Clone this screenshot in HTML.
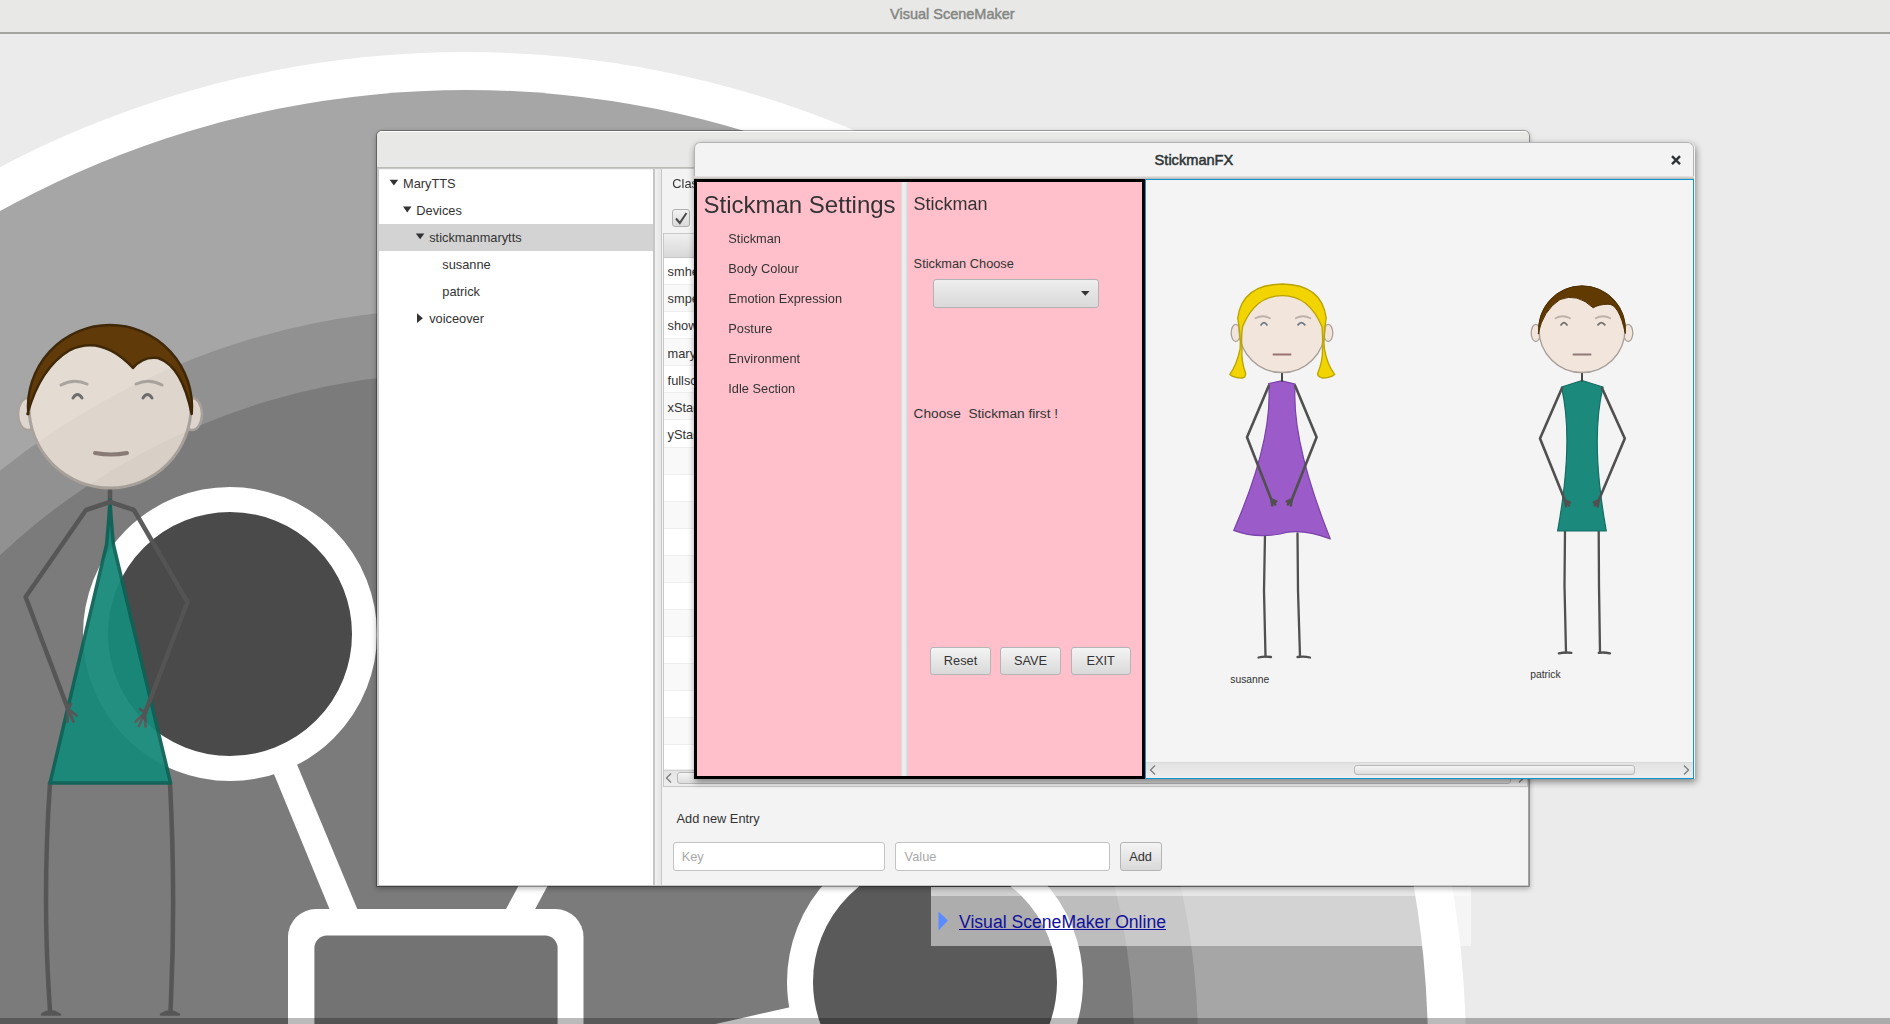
<!DOCTYPE html>
<html><head><meta charset="utf-8">
<style>
*{box-sizing:border-box}
html,body{margin:0;padding:0}
body{width:1890px;height:1024px;overflow:hidden;position:relative;background:#ebebeb;font-family:"Liberation Sans",sans-serif;color:#333}
.a{position:absolute}
.t{position:absolute;line-height:1;white-space:nowrap}
</style></head><body>
<!-- BACKGROUND -->
<svg class="a" style="left:0;top:0" width="1890" height="1024" viewBox="0 0 1890 1024">
<rect width="1890" height="1024" fill="#ebebeb"/>
<circle cx="466" cy="1052" r="1000" fill="#fff"/>
<circle cx="467" cy="1051" r="961" fill="#a6a6a6"/>
<circle cx="461.4" cy="1045" r="736.6" fill="#919191"/>
<circle cx="460.9" cy="1045.8" r="673.1" fill="#7b7b7b"/>
<!-- ring 1 + handle -->
<polygon points="268.5,760.8 292,752.5 357.4,909.2 329.6,909.2" fill="#fff"/>
<circle cx="230" cy="634" r="134.5" fill="#4a4a4a" stroke="#fff" stroke-width="25"/>
<!-- TV -->
<polygon points="504.4,912 533.5,912 567,850 538,850" fill="#fff"/>
<rect x="288" y="909" width="295.5" height="200" rx="28" fill="#fff"/>
<rect x="314.4" y="935.6" width="243.2" height="150" rx="12.5" fill="#737373"/>
<!-- ring 2 + handle -->
<polygon points="800,1005 640,1041 646,1065 806,1029" fill="#fff"/>
<circle cx="935" cy="982" r="135" fill="#5a5a5a" stroke="#fff" stroke-width="26"/>
<!-- big stickman -->
<g id="bigman" stroke-linecap="round" stroke-linejoin="round" opacity="0.95">
<!-- legs -->
<path d="M50,783 Q42,900 50,1010" fill="none" stroke="#555" stroke-width="4.5"/>
<path d="M170,783 Q176,900 170.5,1010" fill="none" stroke="#555" stroke-width="4.5"/>
<path d="M42,1014.5 Q50,1008 60,1014.5 Z" fill="#555" stroke="#555" stroke-width="2.5"/>
<path d="M161,1014.5 Q170,1008 179,1014.5 Z" fill="#555" stroke="#555" stroke-width="2.5"/>
<!-- neck -->
<line x1="110" y1="490" x2="110" y2="503" stroke="#555" stroke-width="4.5"/>
<!-- dress -->
<path d="M110,500 Q108.5,525 106.5,545 L50,783 L170.5,783 L113.5,545 Q111.5,525 110,500 Z" fill="#178a7a" stroke="#0f6357" stroke-width="3.5"/>
<!-- arms -->
<polyline points="68,709 25.6,597 86,510 110,502 134,510 187.5,602 145,713" fill="none" stroke="#555" stroke-width="4.5"/>
<path d="M68,709 L71,704 M68,709 L76.5,715.5 M68,709 L73.5,721.5 M68,709 L67.5,721.5 M145,713 L140,709 M145,713 L135.7,721.5 M145,713 L138.9,726 M145,713 L145.5,726.5" fill="none" stroke="#555" stroke-width="2.8"/>
<!-- ears -->
<mask id="noface"><rect x="0" y="300" width="300" height="250" fill="#fff"/><circle cx="110" cy="407" r="80" fill="#000"/></mask>
<g mask="url(#noface)"><ellipse cx="28" cy="414" rx="10" ry="16" fill="#e1d9d1" stroke="#aaa29b" stroke-width="2.5"/><ellipse cx="192" cy="414" rx="10" ry="16" fill="#e1d9d1" stroke="#aaa29b" stroke-width="2.5"/></g>
<!-- face -->
<circle cx="110" cy="407" r="81" fill="#fdf1e6" fill-opacity="0.75" stroke="#aaa29b" stroke-width="3"/>
<!-- hair -->
<path d="M28.3,414 A82,82 0 1 1 191.7,414 Q182,366 158,358 Q143,356 133,368 Q102,335 70,350 Q40,368 27.5,414 Z" fill="#5c3400" stroke="#3a2200" stroke-width="2.5"/>
<!-- brows -->
<path d="M61,385 Q74,378 87,384" fill="none" stroke="#aaa49e" stroke-width="3"/>
<path d="M136,384 Q149,378 162,385" fill="none" stroke="#aaa49e" stroke-width="3"/>
<!-- eyes -->
<path d="M73,398 Q77.5,391 82,398" fill="none" stroke="#6b6b6b" stroke-width="3"/>
<path d="M143,398 Q147.5,391 152,398" fill="none" stroke="#6b6b6b" stroke-width="3"/>
<!-- mouth -->
<path d="M95,453 Q111,456 127,453" fill="none" stroke="#8b7b77" stroke-width="4"/>
</g>
<rect x="0" y="1018" width="1890" height="6" fill="#000" opacity="0.27"/>
</svg>

<!-- TITLE BAR -->
<div class="a" style="left:0;top:0;width:1890px;height:32px;background:#e8e8e7;border-bottom:2px solid #a4a49f;box-sizing:content-box"></div>
<div class="t" style="left:890px;top:7px;font-size:14.5px;color:#848682;-webkit-text-stroke:0.45px #848682">Visual SceneMaker</div>

<!-- LINK PANEL -->
<div class="a" style="left:931px;top:887px;width:540px;height:59px;background:rgba(255,255,255,0.5)"></div>
<div class="a" style="left:931px;top:887px;width:540px;height:8.5px;background:rgba(255,255,255,0.43)"></div>
<svg class="a" style="left:938px;top:911px" width="11" height="20"><polygon points="0.5,0.5 10,9.5 0.5,19.5" fill="#5b8cff"/></svg>
<div class="t" style="left:959px;top:914px;font-size:17.6px;color:#10109c;text-decoration:underline">Visual SceneMaker Online</div>

<!-- MARYTTS WINDOW -->
<div id="mary" class="a" style="left:376px;top:130px;width:1154px;height:757px;background:#c8c8c8;background-clip:padding-box;border:1px solid rgba(0,0,0,0.31);border-right-width:2px;border-radius:6px 6px 0 0;box-shadow:0 2px 5px rgba(0,0,0,0.25)">
</div>

<div class="a" style="left:377px;top:131px;width:1152px;height:36px;background:#e8e8e7;border-top:1px solid #fff;border-radius:5px 5px 0 0"></div>
<div class="a" style="left:379px;top:169px;width:1149px;height:716px;background:#f3f3f3"></div>
<div class="a" style="left:377px;top:167px;width:1152px;height:1px;background:#bcbcb6"></div>
<div class="a" style="left:379px;top:170px;width:274px;height:715px;background:#fff"></div>
<div class="a" style="left:653px;top:169px;width:1.8px;height:716px;background:#c6c6c6"></div>
<div class="a" style="left:654.8px;top:169px;width:6px;height:716px;background:linear-gradient(90deg,#f0f0f0,#e6e6e6)"></div>
<div class="a" style="left:660.6px;top:169px;width:1.4px;height:716px;background:#c8c8c8"></div>
<div class="a" style="left:379px;top:224px;width:274px;height:26.5px;background:#d3d3d3"></div>
<div class="t" style="left:403px;top:178px;font-size:12.8px;color:#333;">MaryTTS</div>
<div class="t" style="left:416.3px;top:205px;font-size:12.8px;color:#333;">Devices</div>
<div class="t" style="left:429.2px;top:232px;font-size:12.8px;color:#333;">stickmanmarytts</div>
<div class="t" style="left:442.3px;top:259px;font-size:12.8px;color:#333;">susanne</div>
<div class="t" style="left:442.3px;top:286px;font-size:12.8px;color:#333;">patrick</div>
<div class="t" style="left:429.2px;top:313px;font-size:12.8px;color:#333;">voiceover</div>
<svg class="a" style="left:0;top:0" width="700" height="340"><polygon points="389.6,179.7 398.2,179.7 393.9,185.5" fill="#333"/><polygon points="403,206.6 411.5,206.6 407.25,212.4" fill="#333"/><polygon points="415.8,233.5 424.4,233.5 420.1,239.3" fill="#333"/><polygon points="417,313.3 422.9,318.2 417,323" fill="#333"/></svg>
<div class="t" style="left:672.3px;top:178px;font-size:12.8px;color:#333;">Class</div>
<div class="a" style="left:672.3px;top:209.2px;width:17.5px;height:17.8px;border:1px solid #b0b0b0;border-radius:3px;background:linear-gradient(#f2f2f2,#dadada)"></div>
<svg class="a" style="left:672px;top:209px" width="18" height="18"><path d="M4,9.5 L7.8,14 L14.5,4" fill="none" stroke="#4a4a4a" stroke-width="2"/></svg>
<div class="a" style="left:662.5px;top:232.5px;width:865px;height:554px;background:#fff;border:1px solid #c8c8c8"></div>
<div class="a" style="left:663.5px;top:233.5px;width:863px;height:24.7px;background:linear-gradient(#f0f0f0,#d8d8d8);border-bottom:1px solid #c4c4c4"></div>
<div class="a" style="left:663.5px;top:258.20px;width:863px;height:27.05px;background:#fff;border-bottom:1px solid #eeeeee"></div>
<div class="a" style="left:663.5px;top:285.25px;width:863px;height:27.05px;background:#f9f9f9;border-bottom:1px solid #eeeeee"></div>
<div class="a" style="left:663.5px;top:312.30px;width:863px;height:27.05px;background:#fff;border-bottom:1px solid #eeeeee"></div>
<div class="a" style="left:663.5px;top:339.35px;width:863px;height:27.05px;background:#f9f9f9;border-bottom:1px solid #eeeeee"></div>
<div class="a" style="left:663.5px;top:366.40px;width:863px;height:27.05px;background:#fff;border-bottom:1px solid #eeeeee"></div>
<div class="a" style="left:663.5px;top:393.45px;width:863px;height:27.05px;background:#f9f9f9;border-bottom:1px solid #eeeeee"></div>
<div class="a" style="left:663.5px;top:420.50px;width:863px;height:27.05px;background:#fff;border-bottom:1px solid #eeeeee"></div>
<div class="a" style="left:663.5px;top:447.55px;width:863px;height:27.05px;background:#f9f9f9;border-bottom:1px solid #eeeeee"></div>
<div class="a" style="left:663.5px;top:474.60px;width:863px;height:27.05px;background:#fff;border-bottom:1px solid #eeeeee"></div>
<div class="a" style="left:663.5px;top:501.65px;width:863px;height:27.05px;background:#f9f9f9;border-bottom:1px solid #eeeeee"></div>
<div class="a" style="left:663.5px;top:528.70px;width:863px;height:27.05px;background:#fff;border-bottom:1px solid #eeeeee"></div>
<div class="a" style="left:663.5px;top:555.75px;width:863px;height:27.05px;background:#f9f9f9;border-bottom:1px solid #eeeeee"></div>
<div class="a" style="left:663.5px;top:582.80px;width:863px;height:27.05px;background:#fff;border-bottom:1px solid #eeeeee"></div>
<div class="a" style="left:663.5px;top:609.85px;width:863px;height:27.05px;background:#f9f9f9;border-bottom:1px solid #eeeeee"></div>
<div class="a" style="left:663.5px;top:636.90px;width:863px;height:27.05px;background:#fff;border-bottom:1px solid #eeeeee"></div>
<div class="a" style="left:663.5px;top:663.95px;width:863px;height:27.05px;background:#f9f9f9;border-bottom:1px solid #eeeeee"></div>
<div class="a" style="left:663.5px;top:691.00px;width:863px;height:27.05px;background:#fff;border-bottom:1px solid #eeeeee"></div>
<div class="a" style="left:663.5px;top:718.05px;width:863px;height:27.05px;background:#f9f9f9;border-bottom:1px solid #eeeeee"></div>
<div class="a" style="left:663.5px;top:745.10px;width:863px;height:24.90px;background:#fff;border-bottom:1px solid #eeeeee"></div>
<div class="t" style="left:667.6px;top:266px;font-size:12.8px;color:#333;">smheadless</div>
<div class="t" style="left:667.6px;top:293px;font-size:12.8px;color:#333;">smpersistent</div>
<div class="t" style="left:667.6px;top:320px;font-size:12.8px;color:#333;">showstage</div>
<div class="t" style="left:667.6px;top:348px;font-size:12.8px;color:#333;">marytts</div>
<div class="t" style="left:667.6px;top:375px;font-size:12.8px;color:#333;">fullscreen</div>
<div class="t" style="left:667.6px;top:402px;font-size:12.8px;color:#333;">xStage</div>
<div class="t" style="left:667.6px;top:429px;font-size:12.8px;color:#333;">yStage</div>
<div class="a" style="left:663.5px;top:770px;width:863px;height:16px;background:linear-gradient(#e4e4e4,#eeeeee);border-top:1px solid #d0d0d0"></div>
<div class="a" style="left:677px;top:772px;width:834px;height:12px;border:1px solid #b8b8b8;border-radius:3px;background:linear-gradient(#f6f6f6,#dcdcdc)"></div>
<svg class="a" style="left:664px;top:772px" width="10" height="12"><polyline points="7,1.5 2.5,6 7,10.5" fill="none" stroke="#7d7d7d" stroke-width="1.3"/></svg>
<svg class="a" style="left:1516px;top:772px" width="10" height="12"><polyline points="3,1.5 7.5,6 3,10.5" fill="none" stroke="#7d7d7d" stroke-width="1.3"/></svg>
<div class="t" style="left:676.5px;top:813px;font-size:12.8px;color:#333;">Add new Entry</div>
<div class="a" style="left:672.5px;top:842.4px;width:212.3px;height:28.2px;background:#fff;border:1px solid #c2c2c2;border-radius:3px"></div>
<div class="t" style="left:681.7px;top:851px;font-size:12.8px;color:#a9a9a9;">Key</div>
<div class="a" style="left:895.4px;top:842.4px;width:214.3px;height:28.2px;background:#fff;border:1px solid #c2c2c2;border-radius:3px"></div>
<div class="t" style="left:904.6px;top:851px;font-size:12.8px;color:#a9a9a9;">Value</div>
<div class="a" style="left:1120.2px;top:842.2px;width:41.5px;height:28.6px;background:linear-gradient(#f4f4f4,#d9d9d9);border:1px solid #b5b5b5;border-radius:3px"></div>
<div class="t" style="left:1129.2px;top:851px;font-size:12.8px;color:#333;">Add</div>

<!-- STICKMANFX WINDOW -->
<div id="sfx" class="a" style="left:694px;top:141.5px;width:1000.5px;height:637.5px;background:#f3f3f3;border-radius:6px 6px 0 0;box-shadow:1px 3px 7px rgba(0,0,0,0.45)"></div>
<div class="a" style="left:693.7px;top:141.5px;width:1000.6px;height:37.5px;border:1px solid #b3b3b3;border-bottom:none;border-radius:6px 6px 0 0;background:#f3f3f3"></div>
<div class="t" style="left:1154.6px;top:153px;font-size:14.6px;color:#2e3436;-webkit-text-stroke:0.5px #2e3436">StickmanFX</div>
<svg class="a" style="left:1670px;top:154px" width="12" height="12"><path d="M2,2.2 L10,10.2 M10,2.2 L2,10.2" stroke="#2e3436" stroke-width="2.4"/></svg>
<div class="a" style="left:694px;top:178.6px;width:451px;height:600.4px;background:#ffc0cb;border:3px solid #000"></div>
<div class="a" style="left:900.9px;top:182px;width:6.9px;height:594px;background:linear-gradient(90deg,#d8d8d8,#f0f0f0 30%,#e8e8e8 70%,#d0d0d0)"></div>
<div class="t" style="left:703.5px;top:193px;font-size:24px;color:#333;">Stickman Settings</div>
<div class="t" style="left:728.3px;top:233px;font-size:12.8px;color:#333;">Stickman</div>
<div class="t" style="left:728.3px;top:263px;font-size:12.8px;color:#333;">Body Colour</div>
<div class="t" style="left:728.3px;top:293px;font-size:12.8px;color:#333;">Emotion Expression</div>
<div class="t" style="left:728.3px;top:323px;font-size:12.8px;color:#333;">Posture</div>
<div class="t" style="left:728.3px;top:353px;font-size:12.8px;color:#333;">Environment</div>
<div class="t" style="left:728.3px;top:383px;font-size:12.8px;color:#333;">Idle Section</div>
<div class="t" style="left:913.6px;top:195px;font-size:18px;color:#333;">Stickman</div>
<div class="t" style="left:913.6px;top:258px;font-size:12.8px;color:#333;">Stickman Choose</div>
<div class="a" style="left:933.2px;top:279px;width:165.8px;height:28.8px;background:linear-gradient(#eeeeee,#d9d9d9);border:1px solid #b3b3b3;border-radius:3px"></div>
<svg class="a" style="left:1080px;top:290px" width="11" height="7"><polygon points="1,1 9.6,1 5.3,5.8" fill="#333"/></svg>
<div class="t" style="left:913.6px;top:407px;font-size:13.7px;color:#333;">Choose&nbsp; Stickman first !</div>
<div class="a" style="left:930.4px;top:646.6px;width:60.3px;height:28.5px;background:linear-gradient(#f4f4f4,#d9d9d9);border:1px solid #b5b5b5;border-radius:3px;font-size:12.8px;line-height:26.5px;text-align:center;color:#333">Reset</div>
<div class="a" style="left:1000.4px;top:646.6px;width:60.3px;height:28.5px;background:linear-gradient(#f4f4f4,#d9d9d9);border:1px solid #b5b5b5;border-radius:3px;font-size:12.8px;line-height:26.5px;text-align:center;color:#333">SAVE</div>
<div class="a" style="left:1070.5px;top:646.6px;width:60.3px;height:28.5px;background:linear-gradient(#f4f4f4,#d9d9d9);border:1px solid #b5b5b5;border-radius:3px;font-size:12.8px;line-height:26.5px;text-align:center;color:#333">EXIT</div>
<div class="a" style="left:1145px;top:179px;width:549.2px;height:600px;background:#f4f4f4;border:1px solid #0a98d6;border-bottom-width:1.5px"></div>
<div class="a" style="left:694px;top:176px;width:1000.3px;height:2.6px;background:linear-gradient(#ecebea,#b9b2ac)"></div>
<div class="a" style="left:1146px;top:762px;width:547px;height:15.5px;background:linear-gradient(#e2e2e2,#eeeeee);border-top:1px solid #d8d8d8"></div>
<div class="a" style="left:1354.2px;top:764.6px;width:280.4px;height:10.8px;border:1px solid #b8b8b8;border-radius:3px;background:linear-gradient(#f6f6f6,#dcdcdc)"></div>
<svg class="a" style="left:1148px;top:764px" width="10" height="12"><polyline points="7,1.5 2.5,6 7,10.5" fill="none" stroke="#7d7d7d" stroke-width="1.3"/></svg>
<svg class="a" style="left:1681px;top:764px" width="10" height="12"><polyline points="3,1.5 7.5,6 3,10.5" fill="none" stroke="#7d7d7d" stroke-width="1.3"/></svg>
<svg class="a" style="left:1147px;top:180.5px" width="545" height="581" viewBox="1147 180.5 545 581">
<g stroke-linecap="round" stroke-linejoin="round" fill="none">
<!-- SUSANNE -->
<path d="M1265,533 L1264,590 L1265.5,656 M1297.5,533 L1298,590 L1300,656" stroke="#505050" stroke-width="2.3"/>
<path d="M1258.5,657 Q1264,655.5 1271,656.5 M1297.5,656.5 Q1304,655.5 1310,657" stroke="#505050" stroke-width="2.3"/>
<path d="M1268.7,383 L1281.6,380.3 L1295.2,383.7 Q1291,440 1330.3,538.4 Q1300,527 1280,533.5 Q1255,538 1233.7,529.9 Q1273,440 1268.7,383 Z" fill="#9b5bc8" stroke="#7a42ab" stroke-width="1.2"/>
<polyline points="1268.7,385.4 1247,436.7 1271.3,499" stroke="#505050" stroke-width="2.6"/>
<polyline points="1295.2,385.4 1316.6,436.7 1291.8,499" stroke="#505050" stroke-width="2.6"/>
<path d="M1271.3,499 l1,6 M1271.3,499 l4,5 M1271.3,499 l5,2 M1291.8,499 l-1,6 M1291.8,499 l-4,5 M1291.8,499 l-5,2" stroke="#505050" stroke-width="2.5"/>
<line x1="1282" y1="372" x2="1282" y2="380.5" stroke="#454545" stroke-width="2"/>
<ellipse cx="1235.8" cy="332.4" rx="4.6" ry="8.6" fill="#f1e5dc" stroke="#aaa09a" stroke-width="1.3"/>
<ellipse cx="1328.2" cy="332.4" rx="4.6" ry="8.6" fill="#f1e5dc" stroke="#aaa09a" stroke-width="1.3"/>
<circle cx="1282" cy="329" r="43" fill="#f1e5dc" stroke="#a99f99" stroke-width="1.4"/>
<path d="M1282.3,283.5 Q1322,284 1326.2,317.7 Q1323,336 1324.4,348.2 Q1327,364 1334.7,373.9 Q1330,377.5 1322,377.5 Q1317,376 1317.7,372.7 Q1323,360 1322.5,348.2 Q1323,336 1322,326.3 Q1309,295 1282.3,295.1 Q1255,295 1242.6,326.3 Q1241,336 1242,348.2 Q1241,360 1245.6,372.7 Q1246,377 1242,377.5 Q1234,377.5 1229.8,373.9 Q1237,364 1240.1,348.2 Q1241,336 1237.7,317.7 Q1242,284 1282.3,283.5 Z" fill="#f2d400" stroke="#b9a300" stroke-width="1.3"/>
<path d="M1255.4,317.7 Q1262.7,313.8 1270,317.7 M1295.7,317.7 Q1303,313.8 1310.3,317.7" stroke="#bcb0a8" stroke-width="1.8"/>
<path d="M1261,324.4 Q1264,319.8 1267,324.4 M1298,324.4 Q1301.4,319.8 1304.8,324.4" stroke="#6e7a8a" stroke-width="1.8"/>
<line x1="1273.5" y1="354.1" x2="1290.5" y2="354.1" stroke="#9a7272" stroke-width="2"/>
<!-- PATRICK -->
<path d="M1565,530 L1564.5,585 L1566,652 M1598.7,530 L1599,585 L1600,652" stroke="#505050" stroke-width="2.3"/>
<path d="M1558.8,652.8 Q1565,651.5 1571.4,652.3 M1598.7,652.3 Q1604,651.5 1610,652.8" stroke="#505050" stroke-width="2.3"/>
<path d="M1561.5,386.5 L1582,380 L1603,386.5 Q1590,440 1606.3,530.5 L1557.6,530.5 Q1574,440 1561.5,386.5 Z" fill="#1b8a7c" stroke="#146e63" stroke-width="1.2"/>
<polyline points="1562,387.6 1540,438 1565,500" stroke="#505050" stroke-width="2.6"/>
<polyline points="1602,387.6 1624.8,438 1598.7,500" stroke="#505050" stroke-width="2.6"/>
<path d="M1565,500 l1,6 M1565,500 l4,5 M1565,500 l5,2 M1598.7,500 l-1,6 M1598.7,500 l-4,5 M1598.7,500 l-5,2" stroke="#505050" stroke-width="2.5"/>
<line x1="1582" y1="372" x2="1582" y2="380.5" stroke="#454545" stroke-width="2"/>
<ellipse cx="1535.8" cy="332.4" rx="4.6" ry="8.6" fill="#f1e5dc" stroke="#aaa09a" stroke-width="1.3"/>
<ellipse cx="1628.2" cy="332.4" rx="4.6" ry="8.6" fill="#f1e5dc" stroke="#aaa09a" stroke-width="1.3"/>
<circle cx="1582" cy="329" r="43" fill="#f1e5dc" stroke="#a99f99" stroke-width="1.4"/>
<path d="M1538.7,333 A43.5,43.5 0 1 1 1625.3,333 Q1619,303 1607.9,303.7 Q1598,304 1593.2,307.3 Q1577,292 1560,299 Q1543,310 1538.2,333 Z" fill="#603a00" stroke="#4d2e00" stroke-width="1"/>
<path d="M1555.4,317.7 Q1562.7,313.8 1570,317.7 M1595.7,317.7 Q1603,313.8 1610.3,317.7" stroke="#bcb0a8" stroke-width="1.8"/>
<path d="M1561,324.4 Q1564,319.8 1567,324.4 M1598,324.4 Q1601.4,319.8 1604.8,324.4" stroke="#707070" stroke-width="1.8"/>
<line x1="1573.5" y1="354.1" x2="1590.5" y2="354.1" stroke="#8f7b77" stroke-width="2"/>
</g></svg>

<div class="t" style="left:1230.3px;top:675px;font-size:10.3px;color:#333;">susanne</div>
<div class="t" style="left:1530.3px;top:670px;font-size:10.3px;color:#333;">patrick</div>

</body></html>
